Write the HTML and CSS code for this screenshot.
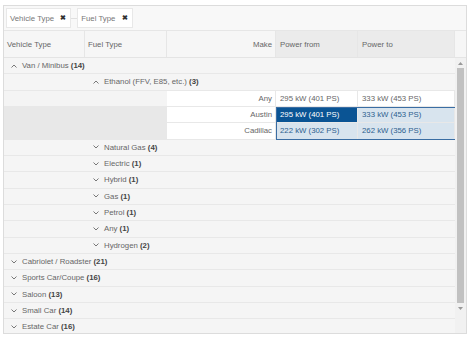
FILE: index.html
```html
<!DOCTYPE html>
<html>
<head>
<meta charset="utf-8">
<link rel="stylesheet" href="styles.css">
</head>
<body>
<div class="grid">
  <div class="group-panel">
    <span class="chip">Vehicle Type <b class="x">✖</b></span>
    <span class="connector"></span>
    <span class="chip">Fuel Type <b class="x">✖</b></span>
  </div>
  <div class="header">
    <div class="hc">Vehicle Type</div>
    <div class="hc">Fuel Type</div>
    <div class="hc right">Make</div>
    <div class="hc dark">Power from</div>
    <div class="hc dark">Power to</div>
    <div class="hc scroll-head"></div>
  </div>
  <div class="body">
    <div class="rows">
      <div class="row grp l1"><span class="chev"><svg width="6" height="4" viewBox="0 0 6 4"><path d="M0.5 3.5 L3 1 L5.5 3.5" fill="none" stroke="#777" stroke-width="1"/></svg></span><span class="t">Van / Minibus <b>(14)</b></span></div>
      <div class="row grp l2"><span class="chev"><svg width="6" height="4" viewBox="0 0 6 4"><path d="M0.5 3.5 L3 1 L5.5 3.5" fill="none" stroke="#777" stroke-width="1"/></svg></span><span class="t">Ethanol (FFV, E85, etc.) <b>(3)</b></span></div>
      <div class="row data">
        <div class="c ind"></div><div class="c ind"></div>
        <div class="c make">Any</div>
        <div class="c">295 kW (401 PS)</div>
        <div class="c">333 kW (453 PS)</div>
      </div>
      <div class="row data">
        <div class="c ind sel-ind"></div><div class="c ind sel-ind"></div>
        <div class="c make">Austin</div>
        <div class="c active">295 kW (401 PS)</div>
        <div class="c sel">333 kW (453 PS)</div>
      </div>
      <div class="row data">
        <div class="c ind sel-ind"></div><div class="c ind sel-ind"></div>
        <div class="c make">Cadillac</div>
        <div class="c sel">222 kW (302 PS)</div>
        <div class="c sel">262 kW (356 PS)</div>
      </div>
      <div class="row grp l2"><span class="chev"><svg width="6" height="4" viewBox="0 0 6 4"><path d="M0.5 0.5 L3 3 L5.5 0.5" fill="none" stroke="#777" stroke-width="1"/></svg></span><span class="t">Natural Gas <b>(4)</b></span></div>
      <div class="row grp l2"><span class="chev"><svg width="6" height="4" viewBox="0 0 6 4"><path d="M0.5 0.5 L3 3 L5.5 0.5" fill="none" stroke="#777" stroke-width="1"/></svg></span><span class="t">Electric <b>(1)</b></span></div>
      <div class="row grp l2"><span class="chev"><svg width="6" height="4" viewBox="0 0 6 4"><path d="M0.5 0.5 L3 3 L5.5 0.5" fill="none" stroke="#777" stroke-width="1"/></svg></span><span class="t">Hybrid <b>(1)</b></span></div>
      <div class="row grp l2"><span class="chev"><svg width="6" height="4" viewBox="0 0 6 4"><path d="M0.5 0.5 L3 3 L5.5 0.5" fill="none" stroke="#777" stroke-width="1"/></svg></span><span class="t">Gas <b>(1)</b></span></div>
      <div class="row grp l2"><span class="chev"><svg width="6" height="4" viewBox="0 0 6 4"><path d="M0.5 0.5 L3 3 L5.5 0.5" fill="none" stroke="#777" stroke-width="1"/></svg></span><span class="t">Petrol <b>(1)</b></span></div>
      <div class="row grp l2"><span class="chev"><svg width="6" height="4" viewBox="0 0 6 4"><path d="M0.5 0.5 L3 3 L5.5 0.5" fill="none" stroke="#777" stroke-width="1"/></svg></span><span class="t">Any <b>(1)</b></span></div>
      <div class="row grp l2"><span class="chev"><svg width="6" height="4" viewBox="0 0 6 4"><path d="M0.5 0.5 L3 3 L5.5 0.5" fill="none" stroke="#777" stroke-width="1"/></svg></span><span class="t">Hydrogen <b>(2)</b></span></div>
      <div class="row grp l1"><span class="chev"><svg width="6" height="4" viewBox="0 0 6 4"><path d="M0.5 0.5 L3 3 L5.5 0.5" fill="none" stroke="#777" stroke-width="1"/></svg></span><span class="t">Cabriolet / Roadster <b>(21)</b></span></div>
      <div class="row grp l1"><span class="chev"><svg width="6" height="4" viewBox="0 0 6 4"><path d="M0.5 0.5 L3 3 L5.5 0.5" fill="none" stroke="#777" stroke-width="1"/></svg></span><span class="t">Sports Car/Coupe <b>(16)</b></span></div>
      <div class="row grp l1"><span class="chev"><svg width="6" height="4" viewBox="0 0 6 4"><path d="M0.5 0.5 L3 3 L5.5 0.5" fill="none" stroke="#777" stroke-width="1"/></svg></span><span class="t">Saloon <b>(13)</b></span></div>
      <div class="row grp l1"><span class="chev"><svg width="6" height="4" viewBox="0 0 6 4"><path d="M0.5 0.5 L3 3 L5.5 0.5" fill="none" stroke="#777" stroke-width="1"/></svg></span><span class="t">Small Car <b>(14)</b></span></div>
      <div class="row grp l1"><span class="chev"><svg width="6" height="4" viewBox="0 0 6 4"><path d="M0.5 0.5 L3 3 L5.5 0.5" fill="none" stroke="#777" stroke-width="1"/></svg></span><span class="t">Estate Car <b>(16)</b></span></div>
      <div class="selection"></div>
    </div>
    <div class="scrollbar">
      <span class="arrow"><svg width="5" height="3" viewBox="0 0 5 3"><path d="M0 3 L2.5 0 L5 3 Z" fill="#999"/></svg></span>
      <span class="thumb"></span>
      <span class="arrow"><svg width="5" height="3" viewBox="0 0 5 3"><path d="M0 0 L2.5 3 L5 0 Z" fill="#999"/></svg></span>
    </div>
  </div>
</div>
</body>
</html>
```

FILE: styles.css
```css
* { box-sizing: border-box; }
body {
  margin: 0;
  background: #fff;
  font-family: "Liberation Sans", Arial, sans-serif;
  font-size: 7.8px;
  color: #666;
}
.grid {
  margin: 5px 0 0 3px;
  width: 464px;
  height: 329px;
  border: 1px solid #dcdcdc;
  background: #f5f5f5;
  display: flex;
  flex-direction: column;
  overflow: hidden;
}
.group-panel {
  height: 25px;
  flex: none;
  background: #f8f8f8;
  border-bottom: 1px solid #e6e6e6;
  display: flex;
  align-items: center;
  padding: 0 0 0 2px;
}
.chip {
  height: 20px;
  background: #fff;
  border: 1px solid #e8e8e8;
  display: flex;
  align-items: center;
  padding: 0 4px 0 3px;
  color: #777;
  white-space: pre;
}
.chip .x {
  color: #333;
  font-size: 7px;
  margin-left: 4px;
}
.connector {
  width: 6px;
  height: 1px;
  background: #e0e0e0;
}
.header {
  height: 27px;
  flex: none;
  display: grid;
  grid-template-columns: 81px 82px 109px 82px 97px 11px;
  border-bottom: 1px solid #e4e4e4;
}
.hc {
  display: flex;
  align-items: center;
  padding: 1px 3px 0;
  background: #f6f6f6;
  border-right: 1px solid #e6e6e6;
  color: #666;
}
.hc.right { justify-content: flex-end; }
.hc.dark { background: #ebebeb; padding-left: 4px; }
.hc.scroll-head { border-right: none; background: #f6f6f6; }
.body {
  flex: 1;
  display: flex;
  min-height: 0;
}
.rows {
  width: 451px;
  position: relative;
  overflow: hidden;
}
.row {
  height: 16.33px;
  border-bottom: 1px solid #e8e8e8;
  line-height: 15px;
  white-space: nowrap;
}
.row b { color: #444; }
.grp {
  display: flex;
  align-items: center;
  background: #f5f5f5;
}
.grp .t { white-space: pre; }
.grp.l1 { padding-left: 7px; }
.grp.l2 { padding-left: 89px; }
.chev {
  width: 11px;
  flex: none;
  display: inline-flex;
  align-items: center;
}
.data {
  display: grid;
  grid-template-columns: 81px 82px 109px 82px 97px;
}
.c {
  background: #fff;
  padding: 0 3px 0 4px;
  border-right: 1px solid #e8e8e8;
  color: #666;
}
.c.ind { background: #f4f4f4; border-right: none; }
.c.sel-ind { background: #e8e8e8; }
.c.make { text-align: right; padding-right: 3px; }
.c.active { background: #0a5494; color: #fff; }
.c.sel { background: #d8e4ee; color: #2d5f8f; }
.selection {
  position: absolute;
  left: 272px;
  top: 49px;
  width: 180px;
  height: 33px;
  border: 1px solid #3a6da3;
  pointer-events: none;
}
.scrollbar {
  width: 11px;
  background: #f1f1f1;
  display: flex;
  flex-direction: column;
  align-items: center;
}
.arrow {
  height: 10px;
  flex: none;
  display: flex;
  align-items: center;
  justify-content: center;
}
.thumb {
  width: 7px;
  height: 235px;
  flex: none;
  background: #c1c1c1;
}
```
